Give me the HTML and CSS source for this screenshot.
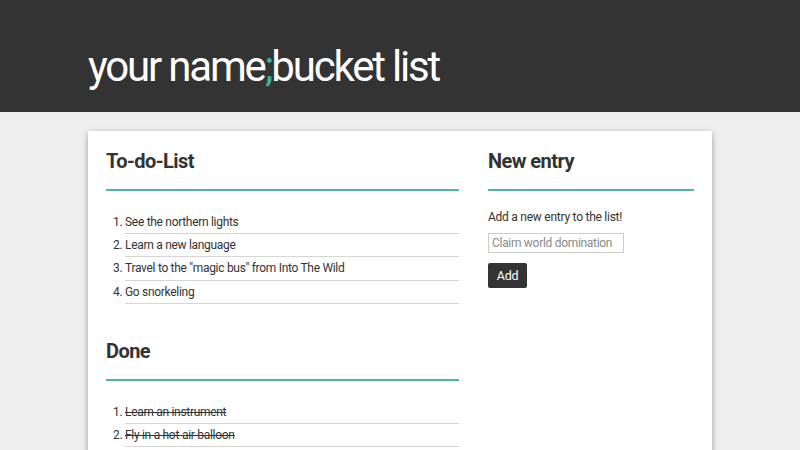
FILE: index.html
```html
<!DOCTYPE html>
<html>
<head>
<meta charset="utf-8">
<link rel="stylesheet" href="styles.css">
</head>
<body>
<header class="top">
  <h1 class="brand">your name<span class="semi">;</span>bucket list</h1>
</header>
<main class="card">
  <section class="col-left">
    <h2 class="title">To-do-List</h2>
    <ol class="items">
      <li>See the northern lights</li>
      <li>Learn a new language</li>
      <li>Travel to the "magic bus" from Into The Wild</li>
      <li>Go snorkeling</li>
    </ol>
    <h2 class="title done-title">Done</h2>
    <ol class="items done">
      <li><s>Learn an instrument</s></li>
      <li><s>Fly in a hot-air balloon</s></li>
    </ol>
  </section>
  <section class="col-right">
    <h2 class="title">New entry</h2>
    <p class="hint">Add a new entry to the list!</p>
    <input class="entry" type="text" placeholder="Claim world domination">
    <button class="add">Add</button>
  </section>
</main>
</body>
</html>
```
FILE: styles.css
```css
html, body {
  margin: 0;
  padding: 0;
}
body {
  background: #efefef;
  font-family: Roboto, "Liberation Sans", sans-serif;
  color: #333;
}
.top {
  background: #333333;
  height: 112px;
  padding: 43px 88px 0;
  box-sizing: border-box;
}
.brand {
  margin: 0;
  color: #fff;
  font-weight: 400;
  font-size: 42px;
  line-height: 48px;
  letter-spacing: -2.2px;
}
.semi {
  color: #3bb39b;
}
.card {
  margin: 19px 88px 0;
  background: #fff;
  box-shadow: 0 2px 6px rgba(0,0,0,0.35);
  padding: 18px 18px 40px;
  display: flex;
  gap: 29px;
}
.col-left {
  width: 353px;
}
.col-right {
  flex: 1;
}
.title {
  margin: 0;
  font-size: 20px;
  line-height: 24px;
  font-weight: 700;
  letter-spacing: -0.55px;
  color: #333;
  padding-bottom: 16px;
  border-bottom: 2px solid #4db6a0;
}
.done-title {
  margin-top: 35px;
}
.items {
  margin: 20px 0 0;
  padding-left: 19px;
  font-size: 12px;
  letter-spacing: -0.3px;
}
.items li {
  line-height: 22.2px;
  border-bottom: 1px solid #d6d6d6;
}
.items li::marker {
  color: #333;
}
.hint {
  margin: 17px 0 0;
  font-size: 12px;
  letter-spacing: -0.25px;
  line-height: 18px;
}
.entry {
  display: block;
  margin-top: 7px;
  width: 136px;
  height: 20px;
  box-sizing: border-box;
  border: 1px solid #ccc;
  padding: 0 3px;
  font-family: Roboto, "Liberation Sans", sans-serif;
  font-size: 12px;
  letter-spacing: -0.3px;
  color: #333;
  outline: none;
}
.entry::placeholder {
  color: #8a8a8a;
}
.add {
  display: block;
  margin-top: 10px;
  width: 39px;
  height: 25px;
  padding: 0;
  border: none;
  border-radius: 2px;
  background: #333;
  color: #fff;
  font-family: Roboto, "Liberation Sans", sans-serif;
  font-size: 12.5px;
  letter-spacing: -0.2px;
}
```
